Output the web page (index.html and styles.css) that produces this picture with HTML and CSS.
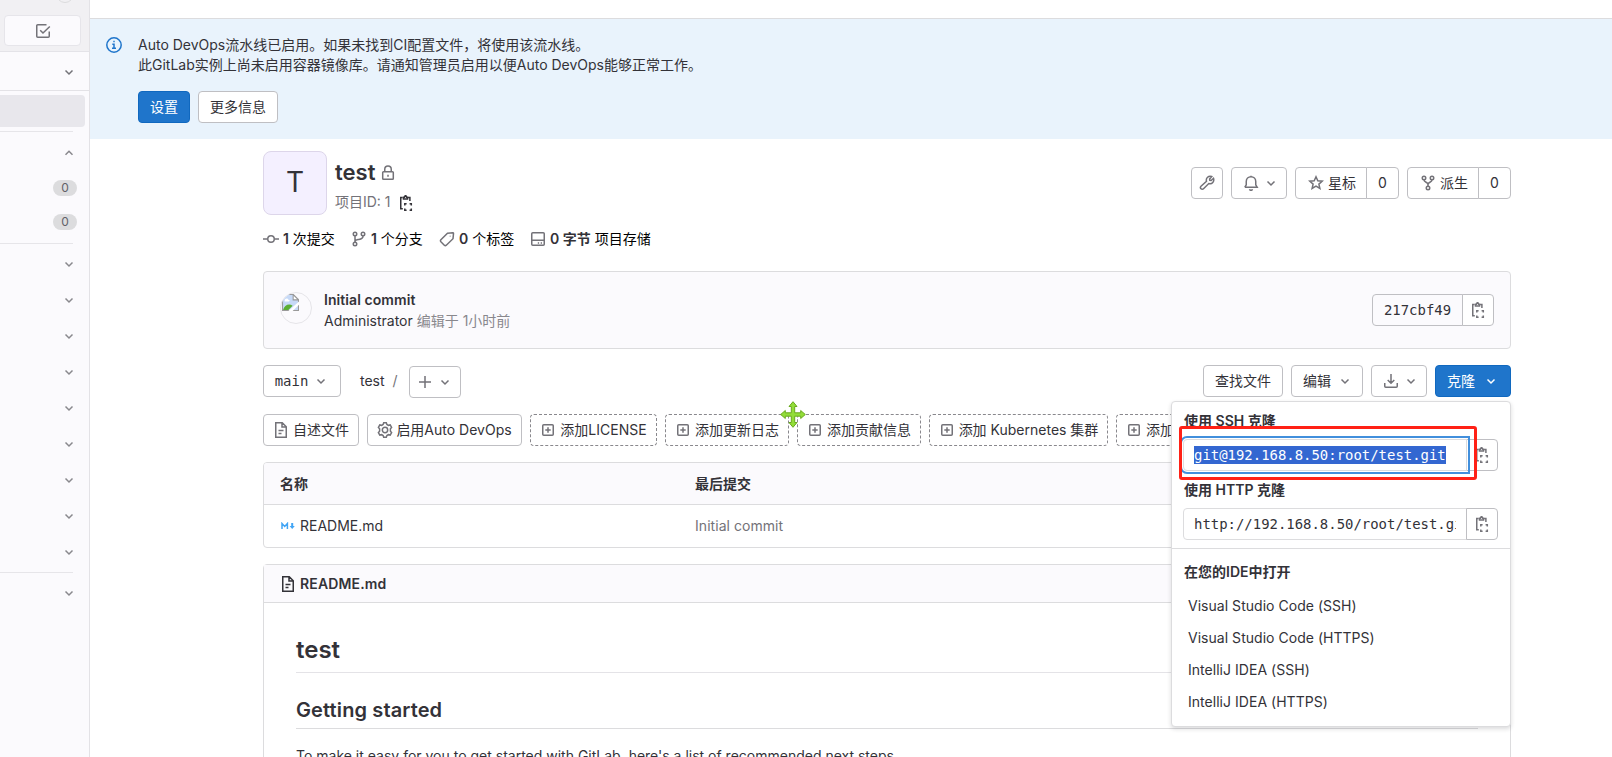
FILE: index.html
```html
<!DOCTYPE html>
<html lang="zh-CN">
<head>
<meta charset="utf-8">
<title>test · GitLab</title>
<link rel="stylesheet" href="styles.css">
</head>
<body>
<svg class="defs" width="0" height="0">
  <symbol id="chev" viewBox="0 0 16 16"><path d="M4.5 6.5 8 10l3.500-3.500"/></symbol>
  <symbol id="chev-up" viewBox="0 0 16 16"><path d="M4.500 9.700 8 6.200l3.500 3.500"/></symbol>
  <symbol id="copy" viewBox="0 0 16 16"><path d="M4.500 2.500H2.750V13.750H4.800M10.300 2.500h1.600V6M5.500 4V2.200h.9L7.200.8h.7l.8 1.400h.8V4zM6.800 10.500V8.800H8.600M11.600 8.800h1.700v1.700M13.300 13.500v1.700h-1.700M8.600 15.200H6.800v-1.700"/></symbol>
  <symbol id="doc" viewBox="0 0 16 16"><path d="M2.750.75h6.500l4 4v10.500H2.750zM9 1v4h4M5.500 8.500h5M5.500 11.500h3"/></symbol>
  <symbol id="plus-sq" viewBox="0 0 16 16"><rect x="2.750" y="2.750" width="10.500" height="10.500" rx="1"/><path d="M8 5.300v5.400M5.300 8h5.400"/></symbol>
  <symbol id="todo" viewBox="0 0 16 16"><path d="M11.500 1.750H2.750a1 1 0 0 0-1 1v10.500a1 1 0 0 0 1 1h10.500a1 1 0 0 0 1-1V8.500M5.200 7.200 8 10l6.800-6.500"/></symbol>
  <symbol id="info" viewBox="0 0 16 16"><circle cx="8" cy="8" r="7.200"/><path d="M6.300 7.300H8v4M6 11.300h4M7.300 4.500h1.400"/></symbol>
  <symbol id="lock" viewBox="0 0 16 16"><rect x="2.700" y="6.750" width="10.600" height="7.500" rx=".8"/><path d="M4.750 6.500V4.300a3.250 3.250 0 0 1 6.500 0v2.200M8 9.800v2"/></symbol>
  <symbol id="commit" viewBox="0 0 16 16"><circle cx="8" cy="8" r="3.250"/><path d="M0 8h4.500M11.500 8H16"/></symbol>
  <symbol id="branch" viewBox="0 0 16 16"><circle cx="4" cy="3" r="1.750"/><circle cx="4" cy="13" r="1.750"/><circle cx="12" cy="3" r="1.750"/><path d="M4 5v6M12 5c0 3.500-3 3.200-5 3.500-2 .3-3 1-3 2"/></symbol>
  <symbol id="tag" viewBox="0 0 16 16"><path d="M8.500 2.200 13.800 1.700a.7.7 0 0 1 .7.700L14 7.700 7.300 14.200a1.500 1.500 0 0 1-2 0L1.900 10.700a1.500 1.500 0 0 1 0-2zM10.800 5.300h.6"/></symbol>
  <symbol id="disk" viewBox="0 0 16 16"><rect x="1.750" y="1.750" width="12.500" height="12.500" rx="1"/><path d="M2 9.250h12M7.800 12h1.300M10.700 12H12"/></symbol>
  <symbol id="wrench" viewBox="0 0 16 16"><path d="M10.800 5.300l-.2-1.400 2.100-2.400C9.500.300 6.600 3 7.500 6.200L2 11.300a1.650 1.650 0 0 0 2.500 2.500L9.800 8.500c3.300 1 5.800-2 4.700-5.200l-2.300 2.200z"/></symbol>
  <symbol id="bell" viewBox="0 0 16 16"><path d="M8 .8v1M1.800 12.250h12.400L12.750 9.800V6.500a4.750 4.750 0 0 0-9.500 0v3.300L1.800 12.250M6.500 14.300a1.600 1.600 0 0 0 3 0"/></symbol>
  <symbol id="star" viewBox="0 0 16 16"><path d="M8 1.800l1.800 4 4.400.4-3.300 2.900 1 4.400L8 11.200l-3.900 2.300 1-4.400-3.300-2.900 4.400-.4z"/></symbol>
  <symbol id="fork" viewBox="0 0 16 16"><circle cx="4" cy="3" r="1.750"/><circle cx="12" cy="3" r="1.750"/><circle cx="8" cy="13" r="1.750"/><path d="M4 4.800C4 7.500 8 7 8 9.500v1.700M12 4.800C12 7.500 8 7 8 9.500"/></symbol>
  <symbol id="download" viewBox="0 0 16 16"><path d="M8 1v9M4.700 7 8 10.200 11.300 7M1.750 10v3.250a1 1 0 0 0 1 1h10.500a1 1 0 0 0 1-1V10"/></symbol>
  <symbol id="plus" viewBox="0 0 16 16"><path d="M8 2v12M2 8h12"/></symbol>
  <symbol id="gear" viewBox="0 0 16 16"><path d="M6.700.75h2.600l.6 1.700 1.500.9 1.800-.4 1.400 2.400-1.200 1.500v2.300l1.200 1.500-1.400 2.400-1.800-.4-1.500.9-.6 1.700H6.700l-.6-1.700-1.500-.9-1.800.4-1.400-2.400 1.200-1.500v-2.300L1.400 5.350l1.400-2.400 1.800.4 1.500-.9z"/><circle cx="8" cy="8" r="2.700"/></symbol>
</svg>

<div class="app">
  <aside class="sidebar">
    <div class="side-top"><span class="side-search"></span><div class="todo"><svg class="ic"><use href="#todo"/></svg></div></div>
    <div class="side-context"><svg class="ic"><use href="#chev"/></svg></div>
    <div class="side-active"></div>
    <div class="side-group pinned">
      <div class="side-row up"><svg class="ic"><use href="#chev-up"/></svg></div>
      <div class="side-row count"><span class="pill">0</span></div>
      <div class="side-row count"><span class="pill">0</span></div>
    </div>
    <div class="side-group sections">
      <div class="side-row"><svg class="ic"><use href="#chev"/></svg></div>
      <div class="side-row"><svg class="ic"><use href="#chev"/></svg></div>
      <div class="side-row"><svg class="ic"><use href="#chev"/></svg></div>
      <div class="side-row"><svg class="ic"><use href="#chev"/></svg></div>
      <div class="side-row"><svg class="ic"><use href="#chev"/></svg></div>
      <div class="side-row"><svg class="ic"><use href="#chev"/></svg></div>
      <div class="side-row"><svg class="ic"><use href="#chev"/></svg></div>
      <div class="side-row"><svg class="ic"><use href="#chev"/></svg></div>
      <div class="side-row"><svg class="ic"><use href="#chev"/></svg></div>
    </div>
    <div class="side-group last"><div class="side-row"><svg class="ic"><use href="#chev"/></svg></div></div>
  </aside>

  <main class="main">
    <div class="topbar"></div>
    <section class="alert">
      <svg class="ic info"><use href="#info"/></svg>
      <div>
        <p class="alert-text">Auto DevOps流水线已启用。如果未找到CI配置文件，将使用该流水线。<br>此GitLab实例上尚未启用容器镜像库。请通知管理员启用以便Auto DevOps能够正常工作。</p>
        <div class="alert-actions"><a class="btn primary">设置</a><a class="btn">更多信息</a></div>
      </div>
    </section>

    <div class="content">
      <header class="project">
        <div class="avatar">T</div>
        <div class="project-name">
          <h1>test <svg class="ic"><use href="#lock"/></svg></h1>
          <div class="pid">项目ID: 1 <svg class="ic dark"><use href="#copy"/></svg></div>
        </div>
        <div class="project-actions">
          <a class="btn w32"><svg class="ic"><use href="#wrench"/></svg></a>
          <a class="btn w56"><svg class="ic"><use href="#bell"/></svg><svg class="ic"><use href="#chev"/></svg></a>
          <div class="split"><a class="btn"><svg class="ic"><use href="#star"/></svg>星标</a><a class="btn num">0</a></div>
          <div class="split"><a class="btn"><svg class="ic"><use href="#fork"/></svg>派生</a><a class="btn num">0</a></div>
        </div>
      </header>

      <nav class="stats">
        <a class="s1"><svg class="ic"><use href="#commit"/></svg><b>1</b> 次提交</a>
        <a class="s2"><svg class="ic"><use href="#branch"/></svg><b>1</b> 个分支</a>
        <a class="s3"><svg class="ic"><use href="#tag"/></svg><b>0</b> 个标签</a>
        <a><svg class="ic"><use href="#disk"/></svg><b>0 字节</b> 项目存储</a>
      </nav>

      <section class="commit">
        <div class="user-img"><svg class="broken" viewBox="0 0 16 16"><path d="M.5.500h10l5 5v10H.5z" fill="#c6d9f7" stroke="#9a9a9a"/><path d="M10.500.500v5h5z" fill="#fff" stroke="#9a9a9a"/><path d="M2.500 6c0-2 3-2.500 3.500-.5 1.500 0 1.500 1.500.5 1.500h-4z" fill="#fff"/><path d="M1 15c1-5 6-6.500 9-4l-4 4z" fill="#5aae32"/><path d="M6 16 16 7v3l-6 6z" fill="#fff"/></svg></div>
        <div class="commit-text"><b>Initial commit</b><div>Administrator <span>编辑于 1小时前</span></div></div>
        <div class="split sha"><a class="btn mono">217cbf49</a><a class="btn"><svg class="ic"><use href="#copy"/></svg></a></div>
      </section>

      <div class="tree-bar">
        <a class="btn mono branch-btn">main<svg class="ic"><use href="#chev"/></svg></a>
        <div class="crumb">test<span>/</span></div>
        <a class="btn add"><svg class="ic"><use href="#plus"/></svg><svg class="ic"><use href="#chev"/></svg></a>
        <div class="tree-actions">
          <a class="btn w80">查找文件</a>
          <a class="btn w72">编辑<svg class="ic"><use href="#chev"/></svg></a>
          <a class="btn w56"><svg class="ic"><use href="#download"/></svg><svg class="ic"><use href="#chev"/></svg></a>
          <div class="clone">
            <a class="btn primary w76">克隆<svg class="ic"><use href="#chev"/></svg></a>
            <div class="menu">
              <h6>使用 SSH 克隆</h6>
              <div class="field"><div class="input focus"><mark>git@192.168.8.50:root/test.git</mark></div><a class="btn"><svg class="ic"><use href="#copy"/></svg></a><i class="marker"></i></div>
              <h6 class="http">使用 HTTP 克隆</h6>
              <div class="field"><div class="input"><span>http://192.168.8.50/root/test.git</span></div><a class="btn"><svg class="ic"><use href="#copy"/></svg></a></div>
              <div class="ide">
                <h6>在您的IDE中打开</h6>
                <a>Visual Studio Code (SSH)</a>
                <a>Visual Studio Code (HTTPS)</a>
                <a>IntelliJ IDEA (SSH)</a>
                <a>IntelliJ IDEA (HTTPS)</a>
              </div>
            </div>
          </div>
        </div>
      </div>

      <div class="quick">
        <a class="btn q1"><svg class="ic"><use href="#doc"/></svg>自述文件</a>
        <a class="btn q2"><svg class="ic"><use href="#gear"/></svg>启用Auto DevOps</a>
        <a class="btn dashed q3"><svg class="ic"><use href="#plus-sq"/></svg>添加LICENSE</a>
        <a class="btn dashed q4"><svg class="ic"><use href="#plus-sq"/></svg>添加更新日志
          <svg class="move" viewBox="0 0 26 27"><path d="M13 .7 17 5.500h-2.300v6.300h6V9.500L25.300 13.500l-4.600 4v-2.300h-6v6.300H17l-4 4.800-4-4.800h2.300v-6.300h-6v2.300L.7 13.500l4.600-4v2.300h6V5.500H9z"/></svg></a>
        <a class="btn dashed q4"><svg class="ic"><use href="#plus-sq"/></svg>添加贡献信息</a>
        <a class="btn dashed q5"><svg class="ic"><use href="#plus-sq"/></svg>添加 Kubernetes 集群</a>
        <a class="btn dashed q6"><svg class="ic"><use href="#plus-sq"/></svg>添加</a>
      </div>

      <div class="files">
        <div class="file-row head"><span>名称</span><span>最后提交</span></div>
        <div class="file-row"><span><svg class="md" viewBox="0 0 14 8"><path d="M1 7V1.500L3.700 4.500 6.400 1.500V7" fill="none" stroke="#42a5f5" stroke-width="1.500"/><path d="M10.200 1h2v3h1.600l-2.600 3-2.600-3h1.600z" fill="#42a5f5"/></svg>README.md</span><span class="muted">Initial commit</span></div>
      </div>

      <article class="readme">
        <div class="readme-head"><svg class="ic"><use href="#doc"/></svg>README.md</div>
        <div class="readme-body">
          <h1>test</h1>
          <h2>Getting started</h2>
          <p>To make it easy for you to get started with GitLab, here's a list of recommended next steps.</p>
        </div>
      </article>
    </div>
  </main>
</div>
</body>
</html>
```
FILE: styles.css
```css
* { box-sizing: border-box; }
body {
  margin: 0;
  height: 757px;
  overflow: hidden;
  font: 14px/20px Inter, "Noto Sans CJK SC", sans-serif;
  color: #333238;
  background: #fff;
}
h1, h2, h6, p { margin: 0; }
.defs { position: absolute; }
.ic { width: 16px; height: 16px; flex: none; fill: none; stroke: #737278; stroke-width: 1.5; }
.ic.dark { stroke: #333238; }
.app { display: flex; height: 757px; overflow: hidden; }

/* sidebar */
.sidebar { width: 90px; flex: none; background: #fbfafd; border-right: 1px solid #e3e2e6; }
.side-top { position: relative; height: 52px; padding: 15px 0 0 4px; background: #f1f0f3; border-bottom: 1px solid #e4e3e8; }
.side-search { position: absolute; left: 56px; top: -15px; width: 18px; height: 18px; border: 1px solid #dcdcde; border-radius: 50%; }
.todo { display: flex; align-items: center; justify-content: center; width: 77px; height: 31px; background: #fbfafd; border: 1px solid #e6e5ea; border-radius: 4px; }
.side-context { display: flex; align-items: center; justify-content: flex-end; height: 39px; padding: 2px 12px 0 0; border-bottom: 1px solid #e3e2e6; }
.side-active { width: 85px; height: 32px; margin: 4px 0; background: #e8e7ec; border-radius: 0 4px 4px 0; }
.side-group { width: 73px; border-top: 1px solid #e6e5e9; }
.side-row { display: flex; align-items: center; justify-content: flex-end; width: 77px; height: 36px; }
.side-row .ic { stroke: #89888d; }
.pinned { height: 112px; padding-top: 5px; }
.side-row.up { height: 34px; padding-bottom: 2px; }
.side-row.count { height: 34px; }
.pill { width: 24px; height: 16px; border-radius: 8px; background: #dcdcde; color: #626168; font-size: 12px; line-height: 16px; text-align: center; }
.sections { height: 329px; padding-top: 2px; }
.last { padding-top: 2px; }

/* buttons */
.btn { display: flex; align-items: center; justify-content: center; height: 32px; padding: 0 11px; border: 1px solid #bfbfc3; border-radius: 4px; background: #fff; white-space: nowrap; }
.btn.primary { background: #1f75cb; border-color: #1068bf; color: #fff; }
.btn.primary .ic { stroke: #fff; }
.btn.dashed { border: 1px dashed #89888d; }
.w32 { width: 32px; }
.w56 { width: 56px; gap: 4px; padding: 0 0 0 4px; }
.w72 { width: 72px; gap: 6px; padding: 0 0 0 2px; }
.w76 { width: 76px; gap: 8px; padding: 0; }
.w80 { width: 80px; }
.mono { font-family: "DejaVu Sans Mono", monospace; font-size: 13.95px; }
.split { display: flex; }
.split .btn:first-child { border-radius: 4px 0 0 4px; width: 72px; padding: 0 0 0 2px; gap: 4px; }
.split .btn:last-child { border-radius: 0 4px 4px 0; margin-left: -1px; width: 33px; padding: 0; }

/* alert */
.main { flex: 1; min-width: 0; }
.topbar { height: 19px; border-bottom: 1px solid #dcdcde; }
.alert { display: flex; height: 120px; padding: 16px; gap: 16px; background: #e9f3fc; }
.alert .info { stroke: #1f75cb; margin-top: 2px; }
.alert-text { height: 40px; white-space: nowrap; }
.alert-actions { display: flex; gap: 8px; margin-top: 16px; }

/* project header */
.content { width: 1248px; margin-left: 173px; }
.project { display: flex; height: 64px; margin-top: 12px; }
.avatar { width: 64px; height: 64px; border: 1px solid #ddd6ea; border-radius: 8px; background: #f4f0ff; font-size: 28px; line-height: 61px; text-align: center; }
.project-name { margin-left: 8px; }
.project-name h1 { display: flex; align-items: center; gap: 5px; height: 30px; margin-top: 6px; font-size: 22px; line-height: 30px; font-weight: 600; }
.project-name h1 .ic { margin-top: 2px; }
.pid { display: flex; align-items: center; gap: 7px; height: 20px; margin-top: 5px; color: #737278; }
.pid .ic { margin-top: 1px; }
.project-actions { display: flex; gap: 8px; margin: 16px 0 0 auto; }
.stats { display: flex; height: 20px; margin-top: 14px; color: #000; }
.stats a { display: flex; align-items: center; white-space: pre; }
.stats .ic { margin-right: 4px; }
.stats b { font-weight: 600; color: #333238; }
.stats .s1 { width: 88px; }
.stats .s2 { width: 88px; }
.stats .s3 { width: 91px; }

/* commit */
.commit { display: flex; height: 78px; margin-top: 22px; padding: 0 16px; background: #fbfafd; border: 1px solid #dcdcde; border-radius: 4px; }
.user-img { width: 32px; height: 32px; margin-top: 20px; border: 1px solid #e6e5e9; border-radius: 50%; overflow: hidden; }
.broken { display: block; width: 17px; height: 17px; margin: 1px 0 0 1px; }
.commit-text { margin: 17px 0 0 12px; line-height: 21px; }
.commit-text b { font-weight: 600; letter-spacing: .07px; }
.commit-text span { color: #89888d; }
.sha { margin: 22px 0 0 auto; }
.split.sha .btn:first-child { width: 91px; padding: 0; background: #fbfafd; }
.split.sha .btn:last-child { width: 32px; }

/* tree toolbar */
.tree-bar { display: flex; height: 33px; margin-top: 16px; }
.branch-btn { width: 78px; gap: 5px; }
.crumb { margin: 6px 0 0 19px; width: 49px; }
.crumb span { margin-left: 8px; color: #737278; }
.btn.add { width: 52px; margin-top: 1px; padding: 0; gap: 4px; }
.tree-actions { display: flex; gap: 8px; margin-left: auto; }
.clone { position: relative; }
.menu { position: absolute; z-index: 5; right: 0; top: 36px; width: 340px; height: 326px; padding: 9px 12px 0 11px; background: #fff; border: 1px solid #dcdcde; border-radius: 4px; box-shadow: 0 2px 4px rgba(31, 30, 36, .16); }
.menu h6 { height: 20px; padding-left: 1px; font-size: 14px; line-height: 20px; font-weight: 600; }
.field { position: relative; display: flex; margin-top: 8px; }
.input { flex: 1; min-width: 0; height: 32px; padding: 0 10px; border: 1px solid #dcdcde; border-radius: 4px 0 0 4px; font: 13.95px/30px "DejaVu Sans Mono", monospace; overflow: hidden; }
.input span { display: block; overflow: hidden; white-space: nowrap; }
.input.focus { outline: 2px solid #428fdc; outline-offset: 1px; z-index: 1; background: #fff; }
.input mark { display: inline-block; height: 18px; line-height: 18px; background: #3367d1; color: #fff; vertical-align: middle; margin-top: -2px; }
.field .btn { width: 32px; margin-left: -1px; padding: 0; border-radius: 0 4px 4px 0; }
.marker { position: absolute; z-index: 2; left: -4px; top: -13px; width: 298px; height: 54px; border: 3px solid #ff2116; border-radius: 3px; }
.menu .http { margin-top: 9px; }
.ide { margin: 8px -12px 0 -11px; padding: 13px 11px 0; border-top: 1px solid #dcdcde; }
.ide h6 { margin-bottom: 8px; }
.ide a { display: block; height: 32px; padding-left: 5px; line-height: 32px; letter-spacing: .03px; }

/* quick actions */
.quick { display: flex; gap: 8px; margin-top: 16px; height: 32px; }
.quick .btn { gap: 4px; padding: 0; flex: none; position: relative; }
.q1 { width: 96px; } .q2 { width: 155px; } .q3 { width: 127px; } .q4 { width: 124px; } .q5 { width: 179px; }
.quick .q2 { gap: 3px; }
.quick .q6 { width: 105px; justify-content: flex-start; padding-left: 9px; }
.move { position: absolute; z-index: 2; left: 114px; top: -14px; width: 26px; height: 27px; fill: #92dd38; stroke: #69a91d; stroke-width: 1; }

/* files */
.files { height: 86px; margin-top: 16px; border: 1px solid #dcdcde; border-radius: 4px; overflow: hidden; }
.file-row { display: flex; align-items: center; height: 42px; padding-left: 16px; }
.file-row span { display: flex; align-items: center; }
.file-row span:first-child { width: 415px; }
.head { background: #fbfafd; border-bottom: 1px solid #dcdcde; font-weight: 600; }
.md { width: 14px; height: 8px; margin: 0 5px 0 1px; }
.muted { color: #737278; letter-spacing: .05px; }

/* readme */
.readme { height: 260px; margin-top: 16px; border: 1px solid #dcdcde; border-radius: 4px; }
.readme-head { display: flex; align-items: center; gap: 4px; height: 38px; padding-left: 16px; background: #fbfafd; border-bottom: 1px solid #dcdcde; font-weight: 600; letter-spacing: .15px; }
.readme-head .ic { stroke: #333238; }
.readme-body { padding: 32px 32px 0; }
.readme-body h1 { height: 38px; border-bottom: 1px solid #e4e3e7; font-size: 24px; line-height: 30px; font-weight: 600; }
.readme-body h2 { height: 32px; margin-top: 24px; border-bottom: 1px solid #dcdcde; font-size: 20px; line-height: 26px; font-weight: 600; letter-spacing: .12px; }
.readme-body p { margin-top: 15px; line-height: 24px; }
```
